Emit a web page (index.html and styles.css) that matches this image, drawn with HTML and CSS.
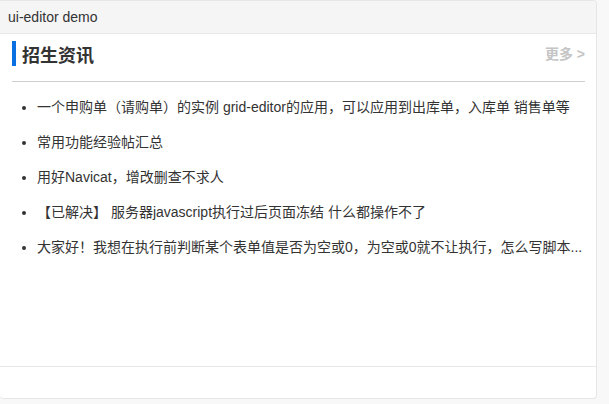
FILE: index.html
```html
<!DOCTYPE html>
<html>
<head>
<meta charset="utf-8">
<link rel="stylesheet" href="styles.css">
</head>
<body>
<div class="panel">
  <div class="panel-head">ui-editor demo</div>
  <div class="panel-body">
    <div class="title-row">
      <span class="title">招生资讯</span>
      <a class="more">更多 &gt;</a>
    </div>
    <ul class="news">
      <li>一个申购单（请购单）的实例 grid-editor的应用，可以应用到出库单，入库单 销售单等</li>
      <li>常用功能经验帖汇总</li>
      <li>用好Navicat，增改删查不求人</li>
      <li>【已解决】 服务器javascript执行过后页面冻结 什么都操作不了</li>
      <li>大家好！我想在执行前判断某个表单值是否为空或0，为空或0就不让执行，怎么写脚本...</li>
    </ul>
  </div>
  <div class="panel-foot"></div>
</div>
</body>
</html>
```
FILE: styles.css
```css
html, body {
  margin: 0;
  padding: 0;
  background: #f8f8f8;
  font-family: "Liberation Sans", "Noto Sans CJK SC", sans-serif;
  color: #333;
}
.panel {
  width: 597px;
  height: 399px;
  box-sizing: border-box;
  background: #fff;
  border: 1px solid #e6e6e6;
  border-left: none;
  border-radius: 0 4px 4px 4px;
  display: flex;
  flex-direction: column;
}
.panel-head {
  height: 33px;
  box-sizing: border-box;
  background: #f5f5f5;
  border-bottom: 1px solid #e8e8e8;
  border-radius: 0 4px 0 0;
  font-size: 14px;
  line-height: 33px;
  padding-left: 8px;
  color: #333;
}
.panel-body {
  flex: 1;
  padding: 7px 11px 0 12px;
}
.title-row {
  display: flex;
  justify-content: space-between;
  align-items: center;
  height: 25px;
  border-left: 4px solid #0a6fe0;
  padding-left: 6px;
  position: relative;
}
.title-row::after {
  content: "";
  position: absolute;
  left: -4px;
  right: 0;
  top: 40px;
  border-bottom: 1px solid #cfcfcf;
}
.title {
  font-size: 18px;
  font-weight: bold;
  color: #333;
}
.more {
  font-size: 14px;
  color: #c4c4c4;
  font-weight: bold;
  align-self: flex-start;
  margin-top: 2px;
}
.news {
  margin: 0;
  padding: 0 0 0 25px;
  margin-top: 33px;
  font-size: 14px;
  color: #333;
}
.news li {
  height: 35px;
  line-height: 16px;
  white-space: nowrap;
}
.panel-foot {
  height: 31px;
  border-top: 1px solid #e8e8e8;
}
```
